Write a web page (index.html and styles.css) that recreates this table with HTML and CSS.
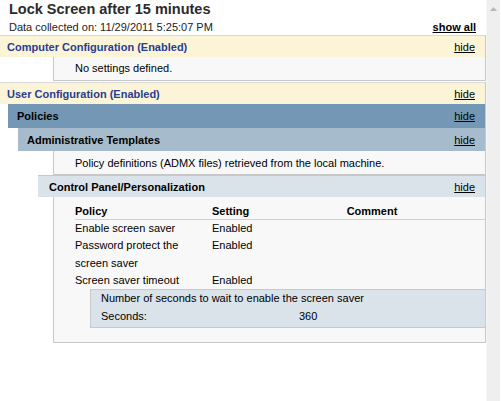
FILE: index.html
```html
<!DOCTYPE html>
<html>
<head>
<meta charset="utf-8">
<link rel="stylesheet" href="styles.css">
</head>
<body>
<div class="window">
  <div class="main">
    <div class="title">Lock Screen after 15 minutes</div>
    <div class="meta">
      <span>Data collected on: 11/29/2011 5:25:07 PM</span>
      <a class="showall">show all</a>
    </div>

    <div class="bar bar-cream"><span class="bar-label blue">Computer Configuration (Enabled)</span><a class="hide">hide</a></div>
    <div class="content c-nosettings">No settings defined.</div>

    <div class="bar bar-cream bar-gap"><span class="bar-label blue">User Configuration (Enabled)</span><a class="hide">hide</a></div>
    <div class="bar bar-policies"><span class="bar-label">Policies</span><a class="hide">hide</a></div>
    <div class="bar bar-admin"><span class="bar-label">Administrative Templates</span><a class="hide">hide</a></div>
    <div class="content c-admx">Policy definitions (ADMX files) retrieved from the local machine.</div>
    <div class="bar bar-cp"><span class="bar-label">Control Panel/Personalization</span><a class="hide">hide</a></div>
    <div class="content c-table">
      <div class="trow thead">
        <span class="col1">Policy</span><span class="col2">Setting</span><span class="col3">Comment</span>
      </div>
      <div class="trow"><span class="col1">Enable screen saver</span><span class="col2">Enabled</span><span class="col3"></span></div>
      <div class="trow"><span class="col1">Password protect the screen saver</span><span class="col2">Enabled</span><span class="col3"></span></div>
      <div class="trow"><span class="col1">Screen saver timeout</span><span class="col2">Enabled</span><span class="col3"></span></div>
      <div class="subbox">
        <div class="subline sub-first">Number of seconds to wait to enable the screen saver</div>
        <div class="subline subkv"><span class="subk">Seconds:</span><span class="subv">360</span></div>
      </div>
    </div>
  </div>
  <div class="scrollbar">
    <svg class="arrow" width="7" height="4" viewBox="0 0 7 4"><path d="M0 4 L3.5 0 L7 4 Z" fill="#b8b8b8"/></svg>
  </div>
</div>
</body>
</html>
```

FILE: styles.css
```css
html, body {
  margin: 0;
  padding: 0;
  background: #ffffff;
}
body {
  font-family: "Liberation Sans", Arial, sans-serif;
  font-size: 11px;
  color: #000;
}
.window {
  display: flex;
  height: 401px;
  width: 501px;
}
.main {
  width: 486px;
}
.scrollbar {
  width: 14px;
  background: #efefef;
  border-left: 1px solid #f6f6f6;
  display: flex;
  justify-content: center;
  align-items: flex-start;
  padding-top: 7px;
  box-sizing: border-box;
}
.arrow { display: block; }

.title {
  font-size: 14.5px;
  font-weight: bold;
  color: #2b2b2b;
  padding: 1px 0 0 9px;
  height: 19px;
  line-height: 17px;
}
.meta {
  display: flex;
  justify-content: space-between;
  padding: 0 10px 0 9px;
  height: 15px;
  line-height: 14px;
  color: #222;
}
.showall {
  font-weight: bold;
  text-decoration: underline;
  color: #000;
  font-size: 11px;
}
.bar {
  display: flex;
  justify-content: space-between;
  align-items: center;
  height: 21px;
  padding: 0 10px 0 7px;
  border-right: 1px solid #c8c8c8;
  font-weight: bold;
}
.bar-cream {
  background: #fcf4d6;
  border-top: 1px solid #d8d8d8;
}
.bar-gap { margin-top: 1px; }
.blue { color: #273d94; }
.hide {
  font-weight: normal;
  text-decoration: underline;
  color: #000;
}
.bar-policies {
  margin-left: 8px;
  background: #7397b4;
  height: 24px;
  padding-left: 9px;
}
.bar-admin {
  margin-left: 18px;
  background: #a6bccd;
  height: 23px;
  padding-left: 9px;
}
.bar-cp {
  margin-left: 38px;
  background: #dbe3ea;
  height: 21px;
  padding-left: 11px;
  border-top: 1px solid #c8c8c8;
}
.content {
  margin-left: 53px;
  border-left: 1px solid #c8c8c8;
  border-right: 1px solid #c8c8c8;
  border-bottom: 1px solid #c8c8c8;
  background: #f8f8f8;
  padding-left: 21px;
}
.c-nosettings {
  height: 23px;
  line-height: 23px;
}
.c-admx {
  height: 23px;
  line-height: 24px;
}
.c-table {
  padding: 6px 0 14px 21px;
}
.trow {
  display: flex;
  line-height: 17.3px;
}
.thead {
  font-weight: bold;
  line-height: 16px;
  border-bottom: 1px solid #d0d0d0;
}
.col1 { width: 137px; }
.col2 { width: 110px; }
.col3 { width: 100px; text-align: center; }
.trow .col1 { padding-right: 8px; box-sizing: border-box; }
.subbox {
  margin-left: 15px;
  background: #dbe3ea;
  border-top: 1px solid #c8c8c8;
  border-bottom: 1px solid #c8c8c8;
  border-left: 1px solid #c8c8c8;
  padding: 0 0 1px 10px;
}
.subline {
  line-height: 19px;
}
.sub-first { line-height: 17px; }
.subkv { display: flex; }
.subk { width: 198px; }
```
